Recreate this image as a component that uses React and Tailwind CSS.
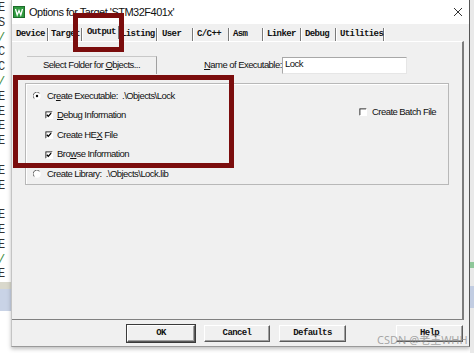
import React from "react";

const tabs = [
  { label: "Device", w: "w-[36px]", pl: "pl-[4px]" },
  { label: "Target", w: "w-[34px]", pl: "pl-[3px]" },
  { label: "Output", w: "w-[37px]", pl: "pl-[5px]", active: true },
  { label: "Listing", w: "w-[38px]", pl: "pl-[2px]" },
  { label: "User", w: "w-[36px]", pl: "pl-[5px]" },
  { label: "C/C++", w: "w-[36px]", pl: "pl-[4px]" },
  { label: "Asm", w: "w-[34px]", pl: "pl-[4px]" },
  { label: "Linker", w: "w-[38px]", pl: "pl-[4px]" },
  { label: "Debug", w: "w-[35px]", pl: "pl-[4px]" },
  { label: "Utilities", w: "w-[48px]", pl: "pl-[4px]" },
];

// code lines peeking out from the editor behind the dialog
const editorLines = ["E", "S", "/", "C", "C", "/", "E", "E", "E", "E", "", "E", "E", "", "E", "E", "E", "/", "E"];

const Check = ({ checked }) => (
  <svg width="8" height="8" viewBox="0 0 13 13" className="shrink-0">
    <rect x="0" y="0" width="13" height="13" fill="#fff" />
    <path d="M0.5 12.5V0.5H12.5" stroke="#808080" fill="none" />
    <path d="M1.5 11.5V1.5H11.5" stroke="#303030" fill="none" strokeWidth="1.4" />
    {checked && <path d="M3 6.2 L5.3 8.7 L10 3.5" stroke="#000" strokeWidth="2.2" fill="none" />}
  </svg>
);

const Radio = ({ checked }) => (
  <svg width="8" height="8" viewBox="0 0 12 12" className="shrink-0">
    <circle cx="6" cy="6" r="5.5" fill="#fff" />
    <path d="M1.8 9.8 A5.2 5.2 0 0 1 9.8 1.8" stroke="#555" strokeWidth="1.3" fill="none" />
    {checked && <circle cx="6" cy="6" r="1.8" fill="#000" />}
  </svg>
);

const Btn = ({ children, def }) => (
  <div
    className={`h-[17px] flex items-center justify-center border border-t-white border-l-white border-b-[#5a5a5a] border-r-[#5a5a5a] shadow-[inset_-1px_-1px_0_#a0a0a0] ${
      def ? "outline outline-1 outline-[#3a3a3a]" : ""
    }`}
  >
    {children}
  </div>
);

export default function App() {
  return (
    <div className="relative w-[474px] h-[353px] overflow-hidden bg-white flex text-black">
      {/* editor strip on the left */}
      <div className="w-[11px] shrink-0 flex flex-col pt-[1px] overflow-hidden font-['Liberation_Mono',monospace] text-[12px]">
        {editorLines.map((c, i) => (
          <div
            key={i}
            className={`h-[14.8px] leading-[14.8px] -ml-[2px] whitespace-nowrap ${c === "/" ? "text-[#3b8a3b]" : "text-[#333]"}`}
          >
            {c}
          </div>
        ))}
        <div className="h-[7px] bg-[#d9d8cc]" />
        <div className="h-[22px] bg-[#c9d3e6]" />
      </div>

      {/* dialog */}
      <div className="w-[459px] shrink-0 h-[347px] flex flex-col border-l border-[#c4c4c4] border-r border-r-[#555] border-b border-b-[#9a9a9a] shadow-[0_2px_4px_rgba(0,0,0,0.25)] bg-[#f0f0f0]">
        {/* title bar */}
        <div className="h-[24px] bg-white flex items-center pl-[1px] font-['Liberation_Sans',sans-serif]">
          <svg width="12" height="12" viewBox="0 0 12 12" className="shrink-0">
            <rect x="0.5" y="0.5" width="11" height="11" fill="#2f9a3f" stroke="#1d6b2a" />
            <path d="M2.5 3 L4.2 9 L6 4.5 L7.8 9 L9.5 3" stroke="#fff" strokeWidth="1.3" fill="none" />
          </svg>
          <span className="ml-[4px] text-[11px] tracking-[-0.5px] text-[#111] whitespace-nowrap">
            Options for Target 'STM32F401x'
          </span>
          <svg width="10" height="10" viewBox="0 0 10 10" className="ml-auto mr-[6px]">
            <path d="M1 1 L9 9 M9 1 L1 9" stroke="#333" strokeWidth="1" />
          </svg>
        </div>

        {/* tab strip */}
        <div className="h-[17px] flex items-end font-['Liberation_Mono',monospace] font-bold text-[9px] tracking-[-0.6px] text-[#111]">
          {tabs.map((t) => (
            <div
              key={t.label}
              className={`${t.w} ${t.pl} h-[13px] leading-[13px] whitespace-nowrap border-r border-[#7a7a7a] shadow-[1px_0_0_#fff] ${
                t.active ? "-translate-y-[2px]" : ""
              }`}
            >
              {t.label}
            </div>
          ))}
        </div>

        {/* tab panel */}
        <div className="w-[452px] h-[279px] border-t border-t-white border-r-2 border-r-[#7c7c7c] border-b border-b-[#808080] pt-[14px] pl-[13px] font-['Liberation_Sans',sans-serif] text-[9.5px] tracking-[-0.55px] text-[#111]">
          <div className="flex items-center h-[18px] pl-[2px]">
            <div className="w-[130px] h-[18px] flex items-center justify-center whitespace-nowrap border-t border-t-[#c8c8c8] border-r border-r-[#a0a0a0]">
              Select Folder for&nbsp;<span className="underline">O</span>bjects...
            </div>
            <div className="ml-[47px] w-[78px] whitespace-nowrap">
              <span className="underline">N</span>ame of Executable:
            </div>
            <div className="w-[125px] h-[17px] bg-white border border-t-[#a8a8a8] border-l-[#a8a8a8] border-b-[#e6e6e6] border-r-[#e6e6e6] pl-[2px] leading-[11px]">
              Lock
            </div>
          </div>

          <div className="mt-[9px] w-[424px] h-[102px] border border-[#b8b8b8] shadow-[inset_1px_1px_0_#fff] flex">
            <div className="flex-1 pl-[7px] pt-[2px] flex flex-col whitespace-nowrap">
              <div className="h-[19.75px] flex items-center gap-[6px]">
                <Radio checked />
                <span>
                  Cr<span className="underline">e</span>ate Executable:&nbsp; .\Objects\Lock
                </span>
              </div>
              <div className="h-[19.75px] flex items-center gap-[4px] pl-[12px]">
                <Check checked />
                <span>
                  <span className="underline">D</span>ebug Information
                </span>
              </div>
              <div className="h-[19.75px] flex items-center gap-[4px] pl-[12px]">
                <Check checked />
                <span>
                  Create HE<span className="underline">X</span> File
                </span>
              </div>
              <div className="h-[19.75px] flex items-center gap-[4px] pl-[12px]">
                <Check checked />
                <span>
                  Bro<span className="underline">w</span>se Information
                </span>
              </div>
              <div className="h-[19.75px] flex items-center gap-[6px]">
                <Radio />
                <span>Create Library:&nbsp; .\Objects\Lock.lib</span>
              </div>
            </div>
            <div className="w-[89px] pt-[22px] whitespace-nowrap">
              <div className="h-[12px] flex items-center gap-[5px]">
                <Check />
                <span>Create Batch File</span>
              </div>
            </div>
          </div>
        </div>

        {/* bottom buttons */}
        <div className="mt-[5px] pl-[115px] flex font-['Liberation_Mono',monospace] font-bold text-[9px] tracking-[-0.6px] text-[#111]">
          <div className="w-[68px]">
            <Btn def>OK</Btn>
          </div>
          <div className="w-[66px] ml-[9px]">
            <Btn>Cancel</Btn>
          </div>
          <div className="w-[67px] ml-[9px]">
            <Btn>Defaults</Btn>
          </div>
          <div className="w-[67px] ml-[50px]">
            <Btn>Help</Btn>
          </div>
        </div>
      </div>

      {/* editor strip on the right */}
      <div className="flex-1 flex flex-col bg-[#e9e9e9]">
        <div className="h-[262px]" />
        <div className="h-[6px] bg-[#8fc79a]" />
        <div className="h-[18px]" />
        <div className="h-[22px] bg-[#c2cde2]" />
      </div>

      {/* red annotation boxes */}
      <div className="absolute left-[73px] top-[13px] w-[51px] h-[39px] border-[5px] border-[#7b0d0d]" />
      <div className="absolute left-[13px] top-[75px] w-[221px] h-[93px] border-[5px] border-[#7b0d0d]" />

      {/* watermark */}
      <div className="absolute left-[377px] top-[333px] text-[11px] leading-[14px] whitespace-nowrap text-[rgba(140,140,140,0.75)] font-['Noto_Sans','Noto_Sans_CJK_SC',sans-serif]">
        CSDN @老王WHH
      </div>
    </div>
  );
}
